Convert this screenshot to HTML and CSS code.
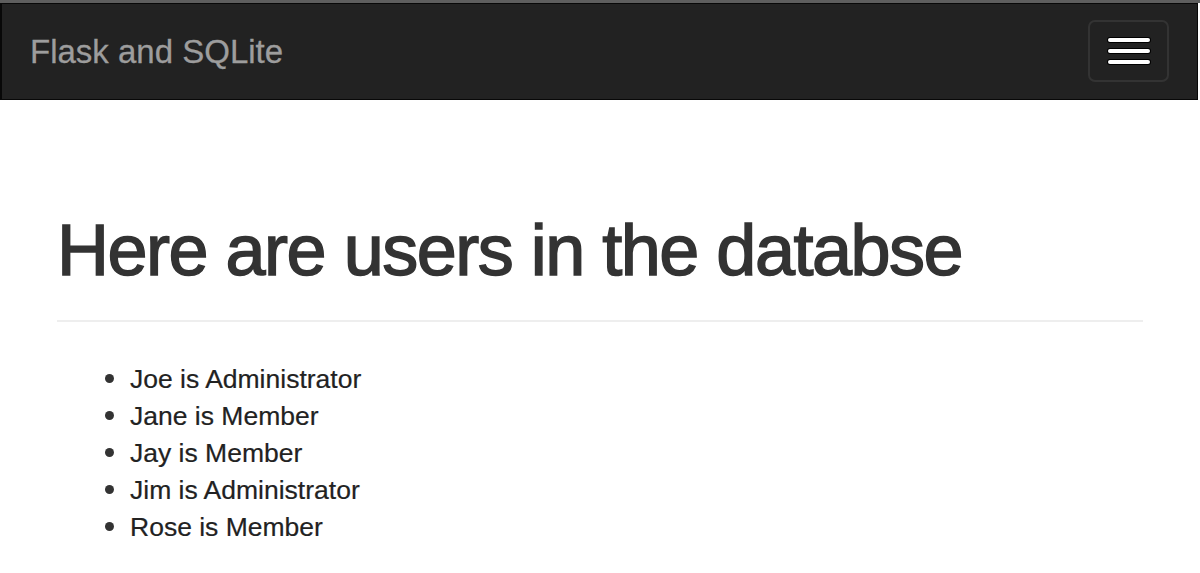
FILE: index.html
```html
<!DOCTYPE html>
<html>
<head>
<meta charset="utf-8">
<link rel="stylesheet" href="styles.css">
</head>
<body>
<div class="topstrip"></div>
<nav class="navbar">
  <a class="brand" href="#">Flask and SQLite</a>
  <button class="toggle" aria-label="menu">
    <span class="bar"></span><span class="bar"></span><span class="bar"></span>
  </button>
</nav>
<main class="container">
  <h1 class="title">Here are users in the databse</h1>
  <hr class="rule">
  <ul class="users">
    <li>Joe is Administrator</li>
    <li>Jane is Member</li>
    <li>Jay is Member</li>
    <li>Jim is Administrator</li>
    <li>Rose is Member</li>
  </ul>
</main>
</body>
</html>
```
FILE: styles.css
```css
html, body {
  margin: 0;
  padding: 0;
  background: #fff;
  font-family: "Liberation Sans", Arial, Helvetica, sans-serif;
  color: #333;
}
.topstrip {
  height: 3px;
  background: #5e5e5e;
}
.navbar {
  box-sizing: border-box;
  height: 97px;
  width: 1198px;
  background: #222;
  border: 1px solid #080808;
  border-left-width: 2px;
  display: flex;
  align-items: center;
  justify-content: space-between;
  padding: 0 28px 0 28px;
}
.brand {
  color: #9d9d9d;
  text-decoration: none;
  font-size: 33px;
  line-height: 1;
  -webkit-text-stroke: 0.3px #9d9d9d;
}
.toggle {
  box-sizing: border-box;
  width: 81px;
  height: 62px;
  background: transparent;
  border: 2px solid #333;
  border-radius: 7px;
  display: flex;
  flex-direction: column;
  align-items: center;
  justify-content: center;
  gap: 7px;
  padding: 0;
  margin-top: -1px;
}
.bar {
  display: block;
  width: 42px;
  height: 4px;
  background: #fff;
  border-radius: 2px;
  box-shadow: 0 0 0 1px #000;
}
.container {
  width: 1086px;
  margin: 0 0 0 57px;
  padding-top: 111px;
}
.title {
  margin: 0;
  font-weight: 400;
  font-size: 72px;
  line-height: 1.1;
  letter-spacing: -1.5px;
  color: #333;
  -webkit-text-stroke: 1.5px #333;
}
.rule {
  margin: 30px 0 0 0;
  border: 0;
  border-top: 2px solid #eee;
}
.users {
  margin: 37px 0 0 0;
  padding-left: 73px;
  font-size: 26.5px;
  line-height: 37px;
  color: #222;
  -webkit-text-stroke: 0.2px #222;
}
.users li {
  height: 37px;
}
.users li::marker {
  font-size: 30px;
  color: #333;
}
```
